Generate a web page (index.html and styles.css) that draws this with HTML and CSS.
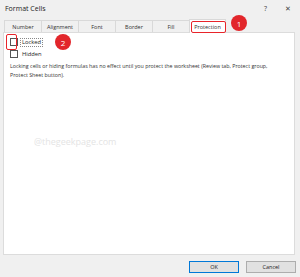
FILE: index.html
```html
<!DOCTYPE html>
<html lang="en">
  <head>
    <meta charset="UTF-8" />
    <meta name="viewport" content="width=device-width, initial-scale=1.0" />
    <title>Format Cells</title>
    <link rel="stylesheet" href="styles.css">
  </head>
  <body>
    <div class="dialog">
      <div class="titlebar">
        <div class="title">Format Cells</div>
        <div class="controls">
          <span class="ctl-help">?</span>
          <span class="ctl-close">✕</span>
        </div>
      </div>
      <div class="tabs">
        <div class="tab">Number</div>
        <div class="tab">Alignment</div>
        <div class="tab">Font</div>
        <div class="tab">Border</div>
        <div class="tab">Fill</div>
        <div class="tab active">Protection
          <span class="mark mark-tab"></span>
        </div>
        <span class="badge badge-1">1</span>
      </div>
      <div class="panel">
        <label class="check-row">
          <span class="box"></span>
          <span class="check-label focus">Locked</span>
          <span class="mark mark-check"></span>
          <span class="badge badge-2">2</span>
        </label>
        <label class="check-row">
          <span class="box"></span>
          <span class="check-label">Hidden</span>
        </label>
        <p class="note">
          Locking cells or hiding formulas has no effect until you protect the worksheet (Review tab, Protect group, Protect Sheet button).
        </p>
        <div class="watermark">@thegeekpage.com</div>
      </div>
      <div class="footer">
        <button class="btn btn-default">OK</button>
        <button class="btn">Cancel</button>
      </div>
    </div>
  </body>
</html>
```

FILE: styles.css
```css
body {
  margin: 0;
  background-color: #f0f0f0;
  font-family: "Open Sans", "Noto Sans", sans-serif;
  color: #1a1a1a;
}

.dialog {
  width: 300px;
  height: 277px;
  display: flex;
  flex-direction: column;
}

.titlebar {
  height: 20px;
  display: flex;
  align-items: center;
  justify-content: space-between;
  padding: 0 9px 4px 5px;
  box-sizing: border-box;
}

.title {
  font-size: 7px;
  color: #222;
}

.controls {
  display: flex;
  gap: 18px;
  font-size: 7px;
  color: #444;
}

.tabs {
  position: relative;
  display: flex;
  margin-left: 4px;
  height: 12px;
}

.tab {
  position: relative;
  width: 37px;
  box-sizing: border-box;
  border: 1px solid #d9d9d9;
  border-right: none;
  border-bottom: none;
  background-color: #f0f0f0;
  font-size: 5.5px;
  color: #333;
  display: flex;
  align-items: center;
  justify-content: center;
}

.tab.active {
  background-color: #fff;
  border-right: 1px solid #d9d9d9;
  margin-top: -1px;
  height: 14px;
  z-index: 1;
}

.mark {
  position: absolute;
  border: 1.5px solid #e8242a;
  border-radius: 2px;
}

.mark-tab {
  left: 1px;
  top: 1px;
  width: 33px;
  height: 10px;
}

.badge {
  position: absolute;
  width: 16px;
  height: 16px;
  border-radius: 50%;
  background-color: #e2262b;
  color: #fff;
  font-size: 8px;
  display: flex;
  align-items: center;
  justify-content: center;
  z-index: 2;
}

.badge-1 {
  left: 227px;
  top: -5px;
}

.badge-2 {
  left: 45px;
  top: -4px;
}

.panel {
  position: relative;
  height: 223px;
  margin: 0 5px 0 3px;
  background-color: #fff;
  border: 1px solid #dcdcdc;
  box-sizing: border-box;
  padding: 5px 6px 0 6px;
}

.check-row {
  position: relative;
  display: flex;
  align-items: center;
  gap: 2px;
  height: 8px;
  margin-bottom: 4px;
  font-size: 5.8px;
  color: #222;
}

.box {
  width: 6px;
  height: 6px;
  border: 1px solid #555;
  background-color: #fff;
}

.check-label {
  padding: 0 1px;
  border: 1px dotted transparent;
  line-height: 7px;
}

.check-label.focus {
  border-color: #888;
}

.mark-check {
  left: -4px;
  top: -4px;
  width: 9px;
  height: 14px;
}

.note {
  margin: 2px 8px 0 0;
  font-size: 5.3px;
  line-height: 9px;
  color: #333;
}

.watermark {
  margin: 55px 0 0 24px;
  font-size: 9px;
  color: #e4e4e4;
}

.footer {
  display: flex;
  justify-content: flex-end;
  gap: 7px;
  padding: 6px 4px 0 0;
}

.btn {
  width: 50px;
  height: 12px;
  padding: 0;
  font-family: inherit;
  font-size: 5.5px;
  color: #222;
  background-color: #e1e1e1;
  border: 1px solid #adadad;
}

.btn-default {
  border-color: #0078d7;
}
```
